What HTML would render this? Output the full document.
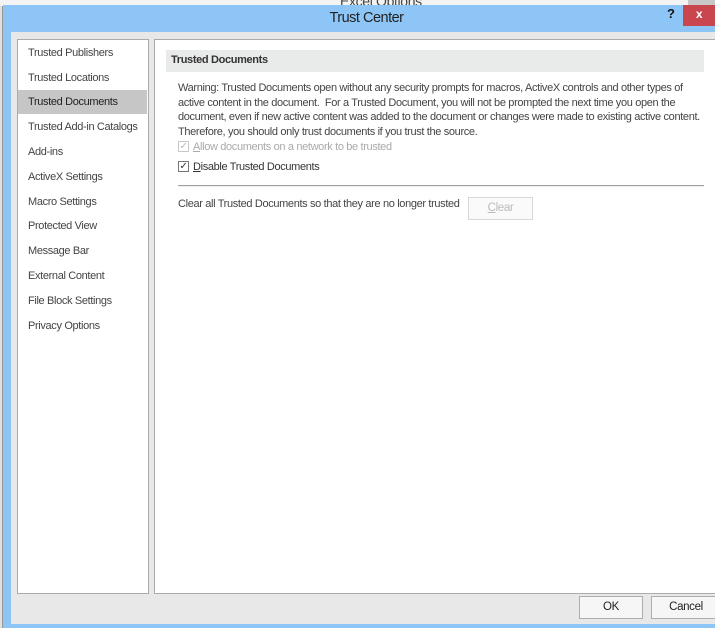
<!DOCTYPE html>
<html><head><style>
body{margin:0;width:715px;height:628px;overflow:hidden;background:#f0f0f0;font-family:"Liberation Sans",sans-serif;font-size:11px;color:#333;position:relative;letter-spacing:-0.35px}
div{position:absolute;box-sizing:border-box}
.nav div{position:absolute;left:0;width:129px;height:24px;line-height:24px;padding-left:10px;color:#444}
.t{white-space:nowrap}
.btn{border:1px solid #adadad;background:#f6f6f6;text-align:center;line-height:20px;color:#222;font-size:11.5px}
</style></head><body>
<div style="left:0;top:0;width:715px;height:6px;background:#f3f3f3"></div>
<div class="t" style="left:340px;top:-7px;font-size:14px;color:#444">Excel Options</div>
<div style="left:688px;top:0;width:27px;height:5px;background:#c7c7c7"></div>
<div style="left:0;top:6px;width:3px;height:622px;background:#e0e0e0;border-right:1px solid #999"></div>
<div style="left:3px;top:5px;width:712px;height:623px;background:#8ec5f7"></div>
<div class="t" style="left:0;width:733px;top:10px;text-align:center;font-size:14.5px;color:#222;letter-spacing:-0.5px">Trust Center</div>
<div class="t" style="left:667px;top:6px;font-size:13px;font-weight:bold;color:#111">?</div>
<div style="left:683px;top:5px;width:32px;height:21px;background:#c9464e;color:#fff;font-weight:bold;font-size:12px;text-align:center;line-height:19px">x</div>
<div style="left:11px;top:32px;width:704px;height:592px;background:#e8e8e8"></div>
<div class="nav" style="left:17px;top:39px;width:132px;height:555px;background:#fff;border:1px solid #ababab">
<div style="top:1px">Trusted Publishers</div>
<div style="top:26px">Trusted Locations</div>
<div style="top:50px;background:#c6c6c6;color:#222">Trusted Documents</div>
<div style="top:75px">Trusted Add-in Catalogs</div>
<div style="top:100px">Add-ins</div>
<div style="top:125px">ActiveX Settings</div>
<div style="top:150px">Macro Settings</div>
<div style="top:174px">Protected View</div>
<div style="top:199px">Message Bar</div>
<div style="top:224px">External Content</div>
<div style="top:249px">File Block Settings</div>
<div style="top:274px">Privacy Options</div>
</div>
<div style="left:154px;top:39px;width:570px;height:555px;background:#fff;border:1px solid #ababab"></div>
<div style="left:166px;top:50px;width:538px;height:22px;background:#e9eaea"></div>
<div class="t" style="left:171px;top:54px;font-weight:bold;color:#333">Trusted Documents</div>
<div class="t" style="left:178px;top:81px;line-height:14.5px;color:#444">Warning: Trusted Documents open without any security prompts for macros, ActiveX controls and other types of<br>active content in the document.&nbsp; For a Trusted Document, you will not be prompted the next time you open the<br>document, even if new active content was added to the document or changes were made to existing active content.<br>Therefore, you should only trust documents if you trust the source.</div>
<div style="left:178px;top:141px;width:11px;height:11px;border:1px solid #c8c8c8;color:#bbb;font-size:10px;line-height:9px;text-align:center">✓</div>
<div class="t" style="left:193px;top:141px;color:#aaa"><u>A</u>llow documents on a network to be trusted</div>
<div style="left:178px;top:161px;width:11px;height:11px;border:1px solid #777;color:#333;font-size:10px;line-height:9px;text-align:center">✓</div>
<div class="t" style="left:193px;top:161px;color:#333"><u>D</u>isable Trusted Documents</div>
<div style="left:178px;top:185px;width:526px;height:2px;border-top:1px solid #a0a0a0;border-bottom:1px solid #f0f0f0"></div>
<div class="t" style="left:178px;top:198px;color:#444">Clear all Trusted Documents so that they are no longer trusted</div>
<div class="btn" style="left:468px;top:197px;width:65px;height:23px;color:#bbb;border-color:#d8d8d8;background:#fafafa"><u>C</u>lear</div>
<div class="btn" style="left:579px;top:596px;width:64px;height:23px">OK</div>
<div class="btn" style="left:651px;top:596px;width:70px;height:23px">Cancel</div>
</body></html>
